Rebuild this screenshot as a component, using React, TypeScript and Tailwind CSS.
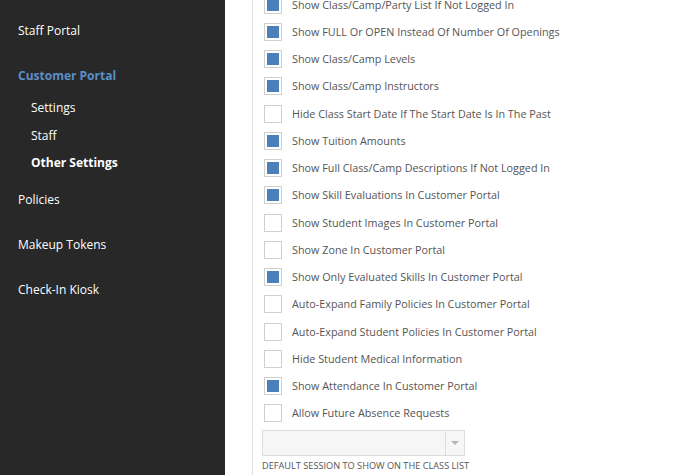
import React from 'react';

const navItems = [
  { label: 'Staff Portal' },
  {
    label: 'Customer Portal',
    active: true,
    children: [
      { label: 'Settings' },
      { label: 'Staff' },
      { label: 'Other Settings', active: true },
    ],
  },
  { label: 'Policies' },
  { label: 'Makeup Tokens' },
  { label: 'Check-In Kiosk' },
];

const options: { label: string; checked: boolean }[] = [
  { label: 'Show Class/Camp/Party List If Not Logged In', checked: true },
  { label: 'Show FULL Or OPEN Instead Of Number Of Openings', checked: true },
  { label: 'Show Class/Camp Levels', checked: true },
  { label: 'Show Class/Camp Instructors', checked: true },
  { label: 'Hide Class Start Date If The Start Date Is In The Past', checked: false },
  { label: 'Show Tuition Amounts', checked: true },
  { label: 'Show Full Class/Camp Descriptions If Not Logged In', checked: true },
  { label: 'Show Skill Evaluations In Customer Portal', checked: true },
  { label: 'Show Student Images In Customer Portal', checked: false },
  { label: 'Show Zone In Customer Portal', checked: false },
  { label: 'Show Only Evaluated Skills In Customer Portal', checked: true },
  { label: 'Auto-Expand Family Policies In Customer Portal', checked: false },
  { label: 'Auto-Expand Student Policies In Customer Portal', checked: false },
  { label: 'Hide Student Medical Information', checked: false },
  { label: 'Show Attendance In Customer Portal', checked: true },
  { label: 'Allow Future Absence Requests', checked: false },
];

const Checkbox = ({ checked }: { checked: boolean }) => (
  <span className="flex h-[18px] w-[18px] shrink-0 items-center justify-center border border-[#cfcfcf] bg-white">
    {checked && <span className="h-[12px] w-[12px] bg-[#4a7fba]" />}
  </span>
);

export default function App() {
  return (
    <div
      className="flex h-[475px] w-[673px] overflow-hidden bg-white"
      style={{ fontFamily: '"Open Sans", "Noto Sans", sans-serif' }}
    >
      <aside className="w-[225px] shrink-0 bg-[#282828] pt-[21px]">
        {navItems.map((item) => (
          <div key={item.label}>
            <div
              className={`flex h-[20px] items-center pl-[18px] text-[12px] ${
                item.active ? 'font-bold text-[#5a8fc8]' : 'text-white'
              }`}
            >
              {item.label}
            </div>
            {item.children ? (
              <div className="pt-[8.25px] pb-[13.25px]">
                {item.children.map((child) => (
                  <div
                    key={child.label}
                    className={`flex h-[27.5px] items-center pl-[31px] text-[12px] text-white ${
                      child.active ? 'font-bold' : ''
                    }`}
                  >
                    {child.label}
                  </div>
                ))}
              </div>
            ) : (
              <div className="h-[25px]" />
            )}
          </div>
        ))}
      </aside>

      <main className="w-[27px] shrink-0" />

      <section className="flex-1 border-l border-[#dedede] pl-[9px]">
        <div className="mt-[-9px]">
          {options.map((opt) => (
            <div key={opt.label} className="flex h-[27.25px] items-center gap-[10px] pl-[2px]">
              <Checkbox checked={opt.checked} />
              <span className="text-[10.8px] text-[#555555]">{opt.label}</span>
            </div>
          ))}
        </div>
        <div className="mt-[3px] flex h-[26px] w-[203px] border border-[#dcdcdc] bg-[#f6f6f6]">
          <div className="flex-1" />
          <div className="flex w-[19px] items-center justify-center border-l border-[#dcdcdc]">
            <span className="h-0 w-0 border-x-[4px] border-t-[4px] border-x-transparent border-t-[#b5b5b5]" />
          </div>
        </div>
        <div className="mt-[3px] text-[9.2px] uppercase text-[#555555]">
          Default Session To Show On The Class List
        </div>
      </section>
    </div>
  );
}
